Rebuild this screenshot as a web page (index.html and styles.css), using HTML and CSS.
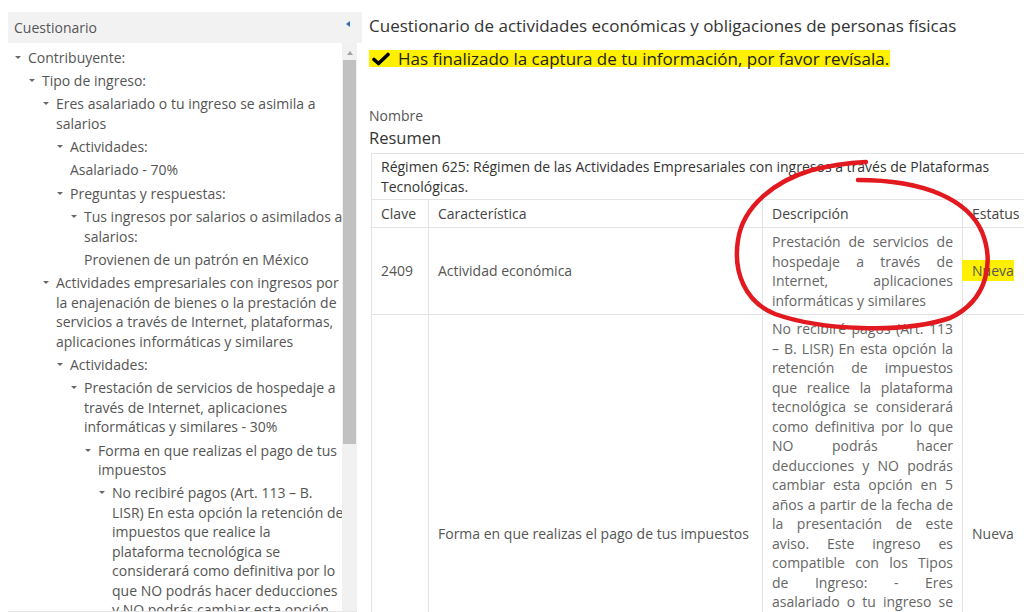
FILE: index.html
```html
<!DOCTYPE html>
<html lang="es">
<head>
<meta charset="utf-8">
<title>Cuestionario</title>
<link rel="stylesheet" href="styles.css">
</head>
<body>
<div class="page">
  <aside class="sidebar">
    <div class="side-head">
      <span>Cuestionario</span>
      <span class="collapse"></span>
    </div>
    <div class="side-body">
      <ul class="tree root">
        <li><span class="caret"></span><span class="label">Contribuyente:</span>
          <ul class="tree">
            <li><span class="caret"></span><span class="label">Tipo de ingreso:</span>
              <ul class="tree">
                <li><span class="caret"></span><span class="label">Eres asalariado o tu ingreso se asimila a salarios</span>
                  <ul class="tree">
                    <li><span class="caret"></span><span class="label">Actividades:</span>
                      <div class="value">Asalariado - 70%</div>
                    </li>
                    <li><span class="caret"></span><span class="label">Preguntas y respuestas:</span>
                      <ul class="tree">
                        <li><span class="caret"></span><span class="label">Tus ingresos por salarios o asimilados a salarios:</span>
                          <div class="value">Provienen de un patrón en México</div>
                        </li>
                      </ul>
                    </li>
                  </ul>
                </li>
                <li><span class="caret"></span><span class="label">Actividades empresariales con ingresos por la enajenación de bienes o la prestación de servicios a través de Internet, plataformas, aplicaciones informáticas y similares</span>
                  <ul class="tree">
                    <li><span class="caret"></span><span class="label">Actividades:</span>
                      <ul class="tree">
                        <li><span class="caret"></span><span class="label">Prestación de servicios de hospedaje a través de Internet, aplicaciones informáticas y similares - 30%</span>
                          <ul class="tree">
                            <li><span class="caret"></span><span class="label">Forma en que realizas el pago de tus impuestos</span>
                              <ul class="tree">
                                <li><span class="caret"></span><span class="label">No recibiré pagos (Art. 113 – B. LISR) En esta opción la retención de impuestos que realice la plataforma tecnológica se considerará como definitiva por lo que NO podrás hacer deducciones y NO podrás cambiar esta opción en 5 años a partir de la fecha de la presentación de este aviso.</span></li>
                              </ul>
                            </li>
                          </ul>
                        </li>
                      </ul>
                    </li>
                  </ul>
                </li>
              </ul>
            </li>
          </ul>
        </li>
      </ul>
      <div class="scrollbar">
        <span class="up"></span>
        <div class="thumb"></div>
      </div>
    </div>
  </aside>

  <main class="main">
    <h1 class="title">Cuestionario de actividades económicas y obligaciones de personas físicas</h1>
    <p class="notice"><span class="mark"><svg class="check" width="18" height="14" viewBox="0 0 18 14"><path d="M2 7.5 L6.5 11.5 L16 2.5" fill="none" stroke="#000" stroke-width="3.6" stroke-linecap="round" stroke-linejoin="round"/></svg>Has finalizado la captura de tu información, por favor revísala.</span></p>
    <div class="nombre">Nombre</div>
    <h2 class="resumen">Resumen</h2>
    <table class="summary">
      <colgroup>
        <col class="c-clave">
        <col class="c-car">
        <col class="c-desc">
        <col class="c-est">
      </colgroup>
      <tr><td class="regimen" colspan="4">Régimen 625: Régimen de las Actividades Empresariales con ingresos a través de Plataformas Tecnológicas.</td></tr>
      <tr class="head">
        <td>Clave</td><td>Característica</td><td>Descripción</td><td>Estatus</td>
      </tr>
      <tr>
        <td>2409</td>
        <td>Actividad económica</td>
        <td class="desc">Prestación de servicios de hospedaje a través de Internet, aplicaciones informáticas y similares</td>
        <td><span class="hl">Nueva</span></td>
      </tr>
      <tr>
        <td></td>
        <td>Forma en que realizas el pago de tus impuestos</td>
        <td class="desc">No recibiré pagos (Art. 113 – B. LISR) En esta opción la retención de impuestos que realice la plataforma tecnológica se considerará como definitiva por lo que NO podrás hacer deducciones y NO podrás cambiar esta opción en 5 años a partir de la fecha de la presentación de este aviso. Este ingreso es compatible con los Tipos de Ingreso: - Eres asalariado o tu ingreso se asimila a salarios. - Actividades empresariales con ingresos por la enajenación de bienes o la prestación de servicios a través de Internet, plataformas y similares.</td>
        <td>Nueva</td>
      </tr>
    </table>
  </main>
</div>

<svg class="annotation" width="1024" height="612" viewBox="0 0 1024 612">
  <path d="M 858 180 C 925 180, 968 200, 982 232 C 994 262, 988 300, 950 318 C 902 334, 820 330, 775 314 C 745 302, 733 272, 738 240 C 743 206, 775 181, 812 170 C 832 165, 848 163, 866 162" fill="none" stroke="#e2191f" stroke-width="4.5" stroke-linecap="round"/>
</svg>
</body>
</html>
```
FILE: styles.css
```css
html, body {
  margin: 0;
  padding: 0;
  background: #fff;
  overflow: hidden;
}
body {
  width: 1024px;
  height: 612px;
  position: relative;
  font-family: "Open Sans", "Noto Sans", sans-serif;
  color: #555;
}
.page {
  display: flex;
  height: 612px;
  box-sizing: border-box;
  padding: 12px 0 0 8px;
}

/* Sidebar */
.sidebar {
  width: 354px;
  flex: none;
  display: flex;
  flex-direction: column;
}
.side-head {
  height: 31px;
  background: #f2f2f2;
  display: flex;
  align-items: center;
  justify-content: space-between;
  padding: 0 12px 0 6px;
  font-size: 14px;
  color: #555;
}
.collapse {
  width: 0;
  height: 0;
  border-top: 3px solid transparent;
  border-bottom: 3px solid transparent;
  border-right: 4px solid #2d6fb3;
  margin-top: -8px;
}
.side-body {
  width: 349px;
  flex: 1;
  position: relative;
  overflow: hidden;
  border-bottom: 1px solid #e6e6e6;
}
.scrollbar {
  position: absolute;
  top: 0;
  right: 0;
  bottom: 0;
  width: 15px;
  background: #f1f1f1;
  display: flex;
  flex-direction: column;
  align-items: center;
}
.up {
  width: 0;
  height: 0;
  border-left: 3.5px solid transparent;
  border-right: 3.5px solid transparent;
  border-bottom: 4px solid #a3a3a3;
  margin-top: 8px;
}
.thumb {
  width: 13px;
  height: 384px;
  margin-top: 5px;
  background: #c1c1c1;
}

.tree {
  list-style: none;
  margin: 0;
  padding: 0;
  font-size: 14px;
  line-height: 19.5px;
  color: #555;
}
.tree.root {
  padding: 1px 0 0 6px;
  width: 331px;
}
.tree li {
  display: grid;
  grid-template-columns: 14px 1fr;
  padding-top: 3.8px;
}
.caret {
  width: 0;
  height: 0;
  border-left: 3px solid transparent;
  border-right: 3px solid transparent;
  border-top: 3.5px solid #666;
  margin: 8px 0 0 1px;
}
.label {
  grid-column: 2;
}
.tree li > .tree,
.tree li > .value {
  grid-column: 1 / span 2;
  margin-left: 14px;
}
.value {
  padding-top: 3.8px;
}

/* Main */
.main {
  margin-left: 7px;
  flex: 1;
  min-width: 0;
}
.title {
  margin: 2px 0 0;
  font-size: 17px;
  line-height: 24px;
  font-weight: 400;
  color: #333;
}
.notice {
  margin: 9px 0 0;
  font-size: 17px;
  line-height: 24px;
  color: #222;
}
.mark {
  background: linear-gradient(to bottom, transparent 3px, #fff000 3px, #fff000 20px, transparent 20px);
  padding: 0 1px 0 3px;
}
.check {
  vertical-align: -1px;
  margin-right: 8px;
}
.nombre {
  margin-top: 35px;
  font-size: 14px;
  line-height: 20px;
  color: #555;
}
.resumen {
  margin: 1px 0 0;
  font-size: 16.5px;
  line-height: 22px;
  font-weight: 400;
  color: #333;
}
.summary {
  margin: 4px 0 0 2px;
  width: 671px;
  table-layout: fixed;
  border-collapse: collapse;
  font-size: 14px;
  line-height: 19.5px;
  color: #555;
}
.c-clave { width: 57px; }
.c-car { width: 334px; }
.c-desc { width: 200px; }
.c-est { width: 80px; }
.summary td {
  border: 1px solid #e3e3e3;
  padding: 4px 9px;
  vertical-align: middle;
}
.summary td.regimen {
  padding: 2.5px 9px 2px;
  color: #333;
  line-height: 20px;
}
.summary .head td {
  color: #444;
}
.summary td.desc {
  text-align: justify;
  color: #666;
}
.hl {
  background: #fff000;
  padding: 1px 0 1px 10px;
  margin-left: -10px;
}

.annotation {
  position: absolute;
  top: 0;
  left: 0;
  pointer-events: none;
}
```
